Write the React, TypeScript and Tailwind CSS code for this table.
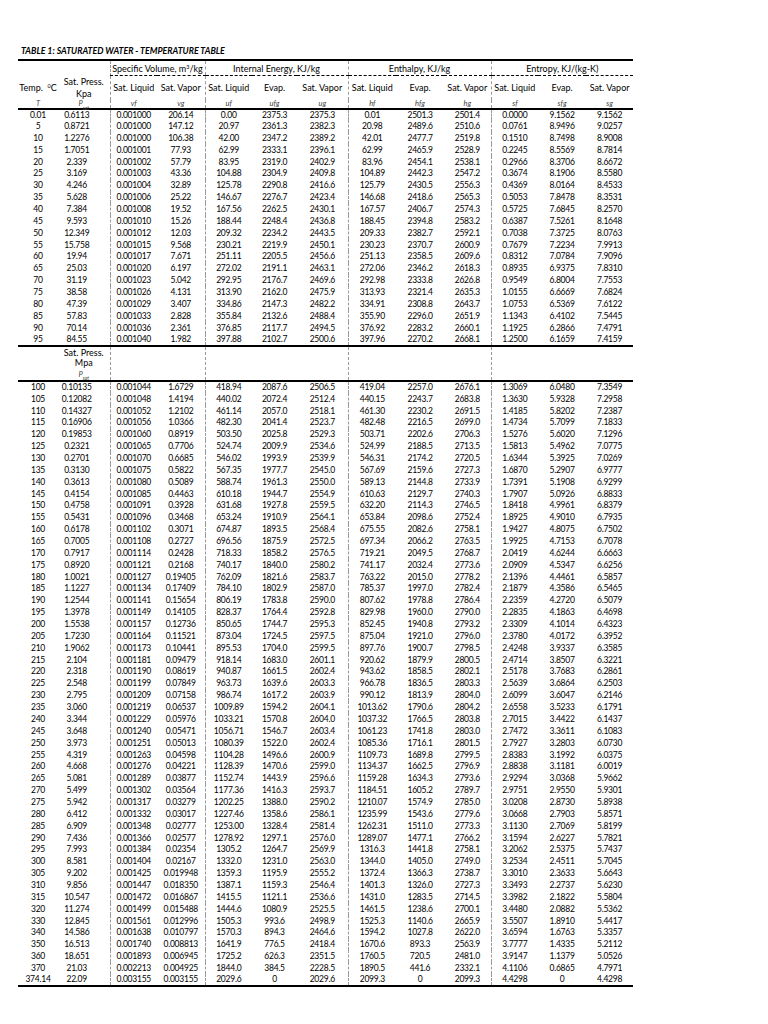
import React from 'react';

// rows: T, Psat, vf, vg, uf, ufg, ug, hf, hfg, hg, sf, sfg, sg
const kpaRows = [
  '0.01 0.6113 0.001000 206.14 0.00 2375.3 2375.3 0.01 2501.3 2501.4 0.0000 9.1562 9.1562',
  '5 0.8721 0.001000 147.12 20.97 2361.3 2382.3 20.98 2489.6 2510.6 0.0761 8.9496 9.0257',
  '10 1.2276 0.001000 106.38 42.00 2347.2 2389.2 42.01 2477.7 2519.8 0.1510 8.7498 8.9008',
  '15 1.7051 0.001001 77.93 62.99 2333.1 2396.1 62.99 2465.9 2528.9 0.2245 8.5569 8.7814',
  '20 2.339 0.001002 57.79 83.95 2319.0 2402.9 83.96 2454.1 2538.1 0.2966 8.3706 8.6672',
  '25 3.169 0.001003 43.36 104.88 2304.9 2409.8 104.89 2442.3 2547.2 0.3674 8.1906 8.5580',
  '30 4.246 0.001004 32.89 125.78 2290.8 2416.6 125.79 2430.5 2556.3 0.4369 8.0164 8.4533',
  '35 5.628 0.001006 25.22 146.67 2276.7 2423.4 146.68 2418.6 2565.3 0.5053 7.8478 8.3531',
  '40 7.384 0.001008 19.52 167.56 2262.5 2430.1 167.57 2406.7 2574.3 0.5725 7.6845 8.2570',
  '45 9.593 0.001010 15.26 188.44 2248.4 2436.8 188.45 2394.8 2583.2 0.6387 7.5261 8.1648',
  '50 12.349 0.001012 12.03 209.32 2234.2 2443.5 209.33 2382.7 2592.1 0.7038 7.3725 8.0763',
  '55 15.758 0.001015 9.568 230.21 2219.9 2450.1 230.23 2370.7 2600.9 0.7679 7.2234 7.9913',
  '60 19.94 0.001017 7.671 251.11 2205.5 2456.6 251.13 2358.5 2609.6 0.8312 7.0784 7.9096',
  '65 25.03 0.001020 6.197 272.02 2191.1 2463.1 272.06 2346.2 2618.3 0.8935 6.9375 7.8310',
  '70 31.19 0.001023 5.042 292.95 2176.7 2469.6 292.98 2333.8 2626.8 0.9549 6.8004 7.7553',
  '75 38.58 0.001026 4.131 313.90 2162.0 2475.9 313.93 2321.4 2635.3 1.0155 6.6669 7.6824',
  '80 47.39 0.001029 3.407 334.86 2147.3 2482.2 334.91 2308.8 2643.7 1.0753 6.5369 7.6122',
  '85 57.83 0.001033 2.828 355.84 2132.6 2488.4 355.90 2296.0 2651.9 1.1343 6.4102 7.5445',
  '90 70.14 0.001036 2.361 376.85 2117.7 2494.5 376.92 2283.2 2660.1 1.1925 6.2866 7.4791',
  '95 84.55 0.001040 1.982 397.88 2102.7 2500.6 397.96 2270.2 2668.1 1.2500 6.1659 7.4159',
];

const mpaRows = [
  '100 0.10135 0.001044 1.6729 418.94 2087.6 2506.5 419.04 2257.0 2676.1 1.3069 6.0480 7.3549',
  '105 0.12082 0.001048 1.4194 440.02 2072.4 2512.4 440.15 2243.7 2683.8 1.3630 5.9328 7.2958',
  '110 0.14327 0.001052 1.2102 461.14 2057.0 2518.1 461.30 2230.2 2691.5 1.4185 5.8202 7.2387',
  '115 0.16906 0.001056 1.0366 482.30 2041.4 2523.7 482.48 2216.5 2699.0 1.4734 5.7099 7.1833',
  '120 0.19853 0.001060 0.8919 503.50 2025.8 2529.3 503.71 2202.6 2706.3 1.5276 5.6020 7.1296',
  '125 0.2321 0.001065 0.7706 524.74 2009.9 2534.6 524.99 2188.5 2713.5 1.5813 5.4962 7.0775',
  '130 0.2701 0.001070 0.6685 546.02 1993.9 2539.9 546.31 2174.2 2720.5 1.6344 5.3925 7.0269',
  '135 0.3130 0.001075 0.5822 567.35 1977.7 2545.0 567.69 2159.6 2727.3 1.6870 5.2907 6.9777',
  '140 0.3613 0.001080 0.5089 588.74 1961.3 2550.0 589.13 2144.8 2733.9 1.7391 5.1908 6.9299',
  '145 0.4154 0.001085 0.4463 610.18 1944.7 2554.9 610.63 2129.7 2740.3 1.7907 5.0926 6.8833',
  '150 0.4758 0.001091 0.3928 631.68 1927.8 2559.5 632.20 2114.3 2746.5 1.8418 4.9961 6.8379',
  '155 0.5431 0.001096 0.3468 653.24 1910.9 2564.1 653.84 2098.6 2752.4 1.8925 4.9010 6.7935',
  '160 0.6178 0.001102 0.3071 674.87 1893.5 2568.4 675.55 2082.6 2758.1 1.9427 4.8075 6.7502',
  '165 0.7005 0.001108 0.2727 696.56 1875.9 2572.5 697.34 2066.2 2763.5 1.9925 4.7153 6.7078',
  '170 0.7917 0.001114 0.2428 718.33 1858.2 2576.5 719.21 2049.5 2768.7 2.0419 4.6244 6.6663',
  '175 0.8920 0.001121 0.2168 740.17 1840.0 2580.2 741.17 2032.4 2773.6 2.0909 4.5347 6.6256',
  '180 1.0021 0.001127 0.19405 762.09 1821.6 2583.7 763.22 2015.0 2778.2 2.1396 4.4461 6.5857',
  '185 1.1227 0.001134 0.17409 784.10 1802.9 2587.0 785.37 1997.0 2782.4 2.1879 4.3586 6.5465',
  '190 1.2544 0.001141 0.15654 806.19 1783.8 2590.0 807.62 1978.8 2786.4 2.2359 4.2720 6.5079',
  '195 1.3978 0.001149 0.14105 828.37 1764.4 2592.8 829.98 1960.0 2790.0 2.2835 4.1863 6.4698',
  '200 1.5538 0.001157 0.12736 850.65 1744.7 2595.3 852.45 1940.8 2793.2 2.3309 4.1014 6.4323',
  '205 1.7230 0.001164 0.11521 873.04 1724.5 2597.5 875.04 1921.0 2796.0 2.3780 4.0172 6.3952',
  '210 1.9062 0.001173 0.10441 895.53 1704.0 2599.5 897.76 1900.7 2798.5 2.4248 3.9337 6.3585',
  '215 2.104 0.001181 0.09479 918.14 1683.0 2601.1 920.62 1879.9 2800.5 2.4714 3.8507 6.3221',
  '220 2.318 0.001190 0.08619 940.87 1661.5 2602.4 943.62 1858.5 2802.1 2.5178 3.7683 6.2861',
  '225 2.548 0.001199 0.07849 963.73 1639.6 2603.3 966.78 1836.5 2803.3 2.5639 3.6864 6.2503',
  '230 2.795 0.001209 0.07158 986.74 1617.2 2603.9 990.12 1813.9 2804.0 2.6099 3.6047 6.2146',
  '235 3.060 0.001219 0.06537 1009.89 1594.2 2604.1 1013.62 1790.6 2804.2 2.6558 3.5233 6.1791',
  '240 3.344 0.001229 0.05976 1033.21 1570.8 2604.0 1037.32 1766.5 2803.8 2.7015 3.4422 6.1437',
  '245 3.648 0.001240 0.05471 1056.71 1546.7 2603.4 1061.23 1741.8 2803.0 2.7472 3.3611 6.1083',
  '250 3.973 0.001251 0.05013 1080.39 1522.0 2602.4 1085.36 1716.1 2801.5 2.7927 3.2803 6.0730',
  '255 4.319 0.001263 0.04598 1104.28 1496.6 2600.9 1109.73 1689.8 2799.5 2.8383 3.1992 6.0375',
  '260 4.668 0.001276 0.04221 1128.39 1470.6 2599.0 1134.37 1662.5 2796.9 2.8838 3.1181 6.0019',
  '265 5.081 0.001289 0.03877 1152.74 1443.9 2596.6 1159.28 1634.3 2793.6 2.9294 3.0368 5.9662',
  '270 5.499 0.001302 0.03564 1177.36 1416.3 2593.7 1184.51 1605.2 2789.7 2.9751 2.9550 5.9301',
  '275 5.942 0.001317 0.03279 1202.25 1388.0 2590.2 1210.07 1574.9 2785.0 3.0208 2.8730 5.8938',
  '280 6.412 0.001332 0.03017 1227.46 1358.6 2586.1 1235.99 1543.6 2779.6 3.0668 2.7903 5.8571',
  '285 6.909 0.001348 0.02777 1253.00 1328.4 2581.4 1262.31 1511.0 2773.3 3.1130 2.7069 5.8199',
  '290 7.436 0.001366 0.02577 1278.92 1297.1 2576.0 1289.07 1477.1 2766.2 3.1594 2.6227 5.7821',
  '295 7.993 0.001384 0.02354 1305.2 1264.7 2569.9 1316.3 1441.8 2758.1 3.2062 2.5375 5.7437',
  '300 8.581 0.001404 0.02167 1332.0 1231.0 2563.0 1344.0 1405.0 2749.0 3.2534 2.4511 5.7045',
  '305 9.202 0.001425 0.019948 1359.3 1195.9 2555.2 1372.4 1366.3 2738.7 3.3010 2.3633 5.6643',
  '310 9.856 0.001447 0.018350 1387.1 1159.3 2546.4 1401.3 1326.0 2727.3 3.3493 2.2737 5.6230',
  '315 10.547 0.001472 0.016867 1415.5 1121.1 2536.6 1431.0 1283.5 2714.5 3.3982 2.1822 5.5804',
  '320 11.274 0.001499 0.015488 1444.6 1080.9 2525.5 1461.5 1238.6 2700.1 3.4480 2.0882 5.5362',
  '330 12.845 0.001561 0.012996 1505.3 993.6 2498.9 1525.3 1140.6 2665.9 3.5507 1.8910 5.4417',
  '340 14.586 0.001638 0.010797 1570.3 894.3 2464.6 1594.2 1027.8 2622.0 3.6594 1.6763 5.3357',
  '350 16.513 0.001740 0.008813 1641.9 776.5 2418.4 1670.6 893.3 2563.9 3.7777 1.4335 5.2112',
  '360 18.651 0.001893 0.006945 1725.2 626.3 2351.5 1760.5 720.5 2481.0 3.9147 1.1379 5.0526',
  '370 21.03 0.002213 0.004925 1844.0 384.5 2228.5 1890.5 441.6 2332.1 4.1106 0.6865 4.7971',
  '374.14 22.09 0.003155 0.003155 2029.6 0 2029.6 2099.3 0 2099.3 4.4298 0 4.4298',
];

const colWidths = [40, 52, 47, 48, 47, 45, 51, 48, 48, 47, 47, 48, 47];
const dashedCols = [2, 4, 7, 10];

const sep = (i: number) => (dashedCols.includes(i) ? 'border-l border-dashed border-l-[#9a9a9a]' : '');

const DataRow: React.FC<{ line: string }> = ({ line }) => (
  <tr className="h-[11.86px]">
    {line.split(' ').map((v, i) => (
      <td key={i} className={`p-0 text-center leading-none whitespace-nowrap ${i === 1 ? 'pr-[14px]' : ''} ${sep(i)}`}>
        {v}
      </td>
    ))}
  </tr>
);

const symbols: React.ReactNode[] = [
  'T',
  <>P<sub className="text-[5px] align-sub">sat</sub></>,
  'vf', 'vg', 'uf', 'ufg', 'ug', 'hf', 'hfg', 'hg', 'sf', 'sfg', 'sg',
];

const subHeads = ['Sat. Liquid', 'Sat. Vapor', 'Sat. Liquid', 'Evap.', 'Sat. Vapor', 'Sat. Liquid', 'Evap.', 'Sat. Vapor', 'Sat. Liquid', 'Evap.', 'Sat. Vapor'];

export default function App() {
  return (
    <div className="min-h-[1024px] w-[768px] bg-white pt-[46px] pl-[18px] font-[Lato,sans-serif] text-black">
      <div className="ml-[3px] mb-[3px] h-[10px] text-[8.8px] leading-[10px] font-bold italic">
        TABLE 1: SATURATED WATER - TEMPERATURE TABLE
      </div>

      <table className="w-[615px] table-fixed border-collapse text-[8.5px] tracking-[-0.25px]">
        <colgroup>
          {colWidths.map((w, i) => (
            <col key={i} style={{ width: w }} />
          ))}
        </colgroup>
        <thead className="text-[9px] tracking-normal">
          <tr className="h-[15.5px] border-t-2 border-t-black">
            <td className="p-0" />
            <td className="p-0" />
            <td colSpan={2} className="p-0 text-center leading-none border-l border-dashed border-l-[#9a9a9a] border-b-[1.5px] border-b-black">
              Specific Volume, m<sup className="text-[5.5px]">3</sup>/kg
            </td>
            <td colSpan={3} className="p-0 text-center leading-none border-l border-dashed border-l-[#9a9a9a] border-b-[1.5px] border-b-black">
              Internal Energy, KJ/kg
            </td>
            <td colSpan={3} className="p-0 text-center leading-none border-l border-dashed border-l-[#9a9a9a] border-b-[1.5px] border-b-black">
              Enthalpy, KJ/kg
            </td>
            <td colSpan={3} className="p-0 text-center leading-none border-l border-dashed border-l-[#9a9a9a] border-b-[1.5px] border-b-black">
              Entropy, KJ/(kg-K)
            </td>
          </tr>
          <tr className="h-[23.5px]">
            <td className="p-0 text-center leading-none whitespace-nowrap">
              Temp.&nbsp; <sup className="text-[5.5px]">0</sup>C
            </td>
            <td className="p-0 text-center leading-[12px]">
              Sat. Press.
              <br />
              Kpa
            </td>
            {subHeads.map((h, i) => (
              <td key={i} className={`p-0 text-center leading-none whitespace-nowrap ${sep(i + 2)}`}>
                {h}
              </td>
            ))}
          </tr>
          <tr className="h-[9px] border-b-2 border-b-black">
            {symbols.map((s, i) => (
              <td key={i} className={`p-0 text-center leading-none italic text-[7.5px] text-[#444] ${sep(i)}`}>
                {s}
              </td>
            ))}
          </tr>
        </thead>
        <tbody>
          {kpaRows.map((r) => (
            <DataRow key={r} line={r} />
          ))}
          <tr className="h-[33px] border-t-2 border-t-black border-b-2 border-b-black text-[9px] tracking-normal">
            <td className="p-0" />
            <td className="p-0 text-center align-top pt-[1px] leading-[10.5px]">
              Sat. Press.
              <br />
              Mpa
              <br />
              <span className="italic text-[7.5px] text-[#444]">
                P<sub className="text-[5px] align-sub">sat</sub>
              </span>
            </td>
            {Array.from({ length: 11 }).map((_, i) => (
              <td key={i} className={`p-0 ${sep(i + 2)}`} />
            ))}
          </tr>
          {mpaRows.map((r) => (
            <DataRow key={r} line={r} />
          ))}
          <tr className="h-0 border-t-2 border-t-black">
            {colWidths.map((_, i) => (
              <td key={i} className="p-0" />
            ))}
          </tr>
        </tbody>
      </table>
    </div>
  );
}
